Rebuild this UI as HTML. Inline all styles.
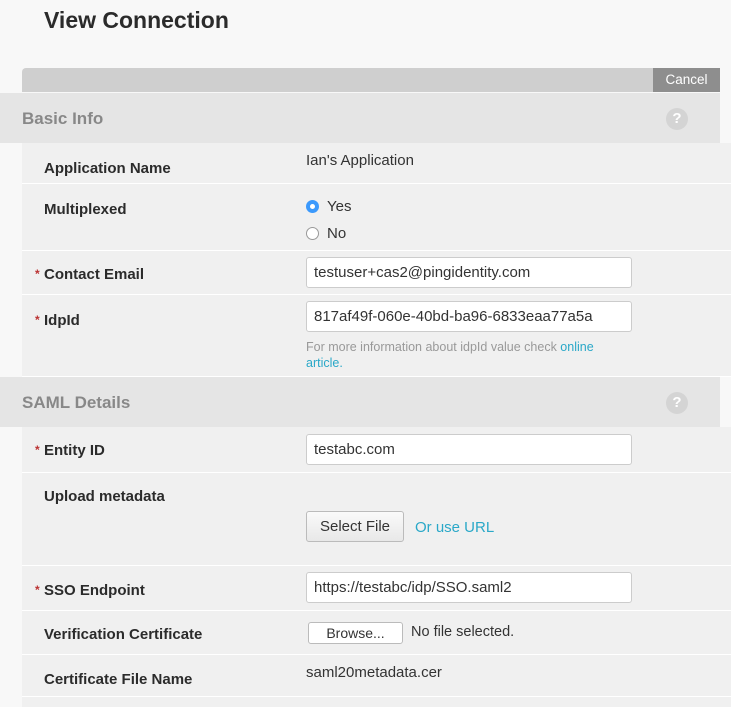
<!DOCTYPE html>
<html><head><style>
body{margin:0;width:731px;height:701px;overflow:hidden;background:#f8f8f8;font-family:"Liberation Sans",Arial,sans-serif;color:#333;position:relative}
.a{position:absolute}
h1{position:absolute;left:44px;top:7px;margin:0;font-size:23px;font-weight:bold;color:#2b2b2b}
.bar{left:22px;top:68px;width:698px;height:24px;background:#cfcfcf;border-radius:4px 4px 0 0}
.cancel{left:653px;top:68px;width:67px;height:24px;background:#8e8e8e;color:#fff;font-size:13.5px;text-align:center;line-height:24px}
.hdr{left:0;width:720px;height:50px;background:#e5e5e5;font-size:17px;font-weight:bold;color:#888;line-height:52px;padding-left:22px;box-sizing:border-box}
.help{width:22px;height:22px;border-radius:50%;background:#d4d4d4;color:#fff;font-size:15px;font-weight:bold;text-align:center;line-height:22px;left:666px}
.row{left:22px;width:709px;background:#f0f0f0;border-bottom:1px solid #fff;box-sizing:border-box}
.lbl{position:absolute;left:22px;font-size:15px;font-weight:bold;color:#2b2b2b}
.req::before{content:"*";color:#b33;font-size:12px;position:absolute;left:-9px;top:1px}
.val{position:absolute;left:284px;font-size:15px;color:#333}
.inp{position:absolute;left:284px;width:326px;height:31px;background:#fff;border:1px solid #ccc;border-radius:3px;box-sizing:border-box;font-size:15px;padding-left:7px;line-height:29px;color:#333}
.rad{position:absolute;left:284px;width:13px;height:13px;border-radius:50%;box-sizing:border-box}
</style></head><body>
<h1>View Connection</h1>
<div class="a bar"></div>
<div class="a cancel">Cancel</div>

<div class="a hdr" style="top:93px">Basic Info</div>
<div class="a help" style="top:108px">?</div>

<div class="a row" style="top:143px;height:41px"><span class="lbl" style="top:17px">Application Name</span><span class="val" style="top:9px">Ian's Application</span></div>
<div class="a row" style="top:184px;height:67px"><span class="lbl" style="top:17px">Multiplexed</span>
<span class="rad" style="top:16px;background:#3b99fc;border:4px solid #3b99fc"><span style="position:absolute;left:0;top:0;width:5px;height:5px;background:#fff;border-radius:50%"></span></span><span class="val" style="left:305px;top:14px">Yes</span>
<span class="rad" style="top:43px;background:#fff;border:1px solid #999"></span><span class="val" style="left:305px;top:41px">No</span></div>
<div class="a row" style="top:251px;height:44px"><span class="lbl req" style="top:15px">Contact Email</span><div class="inp" style="top:6px">testuser+cas2@pingidentity.com</div></div>
<div class="a row" style="top:295px;height:82px"><span class="lbl req" style="top:17px">IdpId</span><div class="inp" style="top:6px">817af49f-060e-40bd-ba96-6833eaa77a5a</div>
<div class="val" style="top:44px;font-size:12.5px;color:#999;line-height:16px;width:320px">For more information about idpId value check <span style="color:#2aa8c8">online article.</span></div></div>

<div class="a hdr" style="top:377px">SAML Details</div>
<div class="a help" style="top:392px">?</div>

<div class="a row" style="top:427px;height:46px"><span class="lbl req" style="top:15px">Entity ID</span><div class="inp" style="top:7px">testabc.com</div></div>
<div class="a row" style="top:473px;height:93px"><span class="lbl" style="top:15px">Upload metadata</span>
<div style="position:absolute;left:284px;top:38px;width:98px;height:31px;border:1px solid #bbb;border-radius:3px;background:linear-gradient(#fafafa,#e8e8e8);box-sizing:border-box;text-align:center;line-height:29px;font-size:15px">Select File</div>
<span class="val" style="left:393px;top:46px;color:#2aa8c8">Or use URL</span></div>
<div class="a row" style="top:566px;height:45px"><span class="lbl req" style="top:16px">SSO Endpoint</span><div class="inp" style="top:6px">https://testabc/idp/SSO.saml2</div></div>
<div class="a row" style="top:611px;height:44px"><span class="lbl" style="top:15px">Verification Certificate</span>
<div style="position:absolute;left:286px;top:11px;width:95px;height:22px;border:1px solid #bbb;border-radius:3px;background:#fff;box-sizing:border-box;text-align:center;line-height:20px;font-size:14px">Browse...</div>
<span class="val" style="left:389px;top:13px;font-size:14.5px">No file selected.</span></div>
<div class="a row" style="top:655px;height:42px"><span class="lbl" style="top:16px">Certificate File Name</span><span class="val" style="top:9px">saml20metadata.cer</span></div>
<div class="a row" style="top:697px;height:10px;border:0"></div>
</body></html>
